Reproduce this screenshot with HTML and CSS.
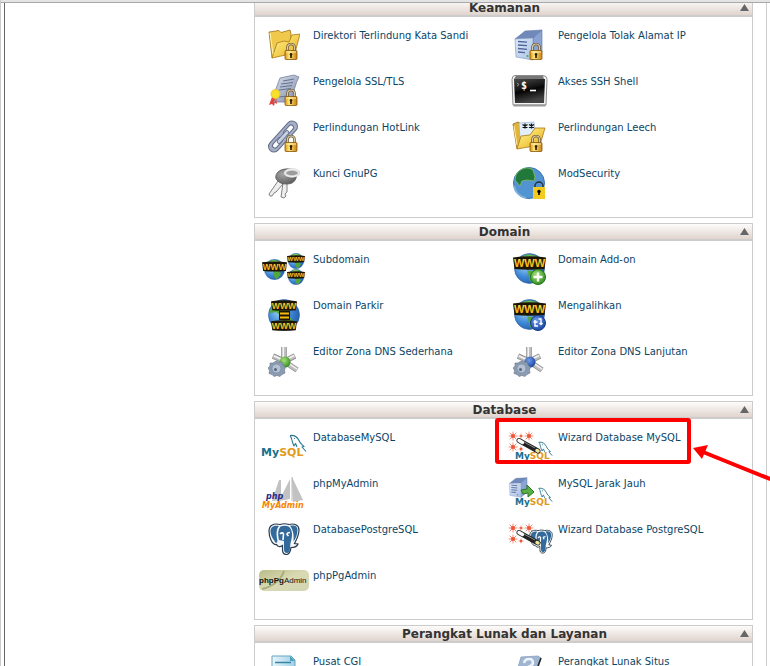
FILE: index.html
```html
<!DOCTYPE html>
<html lang="id">
<head>
<meta charset="utf-8">
<title>cPanel</title>
<link rel="stylesheet" href="styles.css">
</head>
<body>
<svg class="sprite" aria-hidden="true">
  <defs>
    <linearGradient id="gold" x1="0" y1="0" x2="1" y2="1"><stop offset="0" stop-color="#fff3a0"/><stop offset=".5" stop-color="#f5d253"/><stop offset="1" stop-color="#dda52a"/></linearGradient>
    <linearGradient id="brass" x1="0" y1="0" x2="1" y2="0"><stop offset="0" stop-color="#dc9414"/><stop offset=".35" stop-color="#ffe778"/><stop offset="1" stop-color="#c98212"/></linearGradient>
    <linearGradient id="steel" x1="0" y1="0" x2="1" y2="1"><stop offset="0" stop-color="#dfeafa"/><stop offset="1" stop-color="#a9bfe2"/></linearGradient>
    <linearGradient id="paper" x1="0" y1="0" x2="1" y2="1"><stop offset="0" stop-color="#dde3ef"/><stop offset="1" stop-color="#7f8baa"/></linearGradient>
    <linearGradient id="screen" x1="0" y1="0" x2=".3" y2="1"><stop offset="0" stop-color="#4a4a4a"/><stop offset=".45" stop-color="#161616"/><stop offset=".55" stop-color="#050505"/><stop offset="1" stop-color="#444"/></linearGradient>
    <linearGradient id="olive" x1="0" y1="0" x2="1" y2="1"><stop offset="0" stop-color="#b9bc87"/><stop offset=".5" stop-color="#d9dab3"/><stop offset="1" stop-color="#d3d4b4"/></linearGradient>
    <linearGradient id="sheet" x1="0" y1="0" x2="1" y2="0"><stop offset="0" stop-color="#e9f5fa"/><stop offset="1" stop-color="#9fd0e6"/></linearGradient>
    <linearGradient id="yellow" x1="0" y1="0" x2="0" y2="1"><stop offset="0" stop-color="#ffe14a"/><stop offset="1" stop-color="#f6a800"/></linearGradient>
    <radialGradient id="sea" cx=".35" cy=".4" r=".75"><stop offset="0" stop-color="#9dd2f8"/><stop offset=".5" stop-color="#3f88d6"/><stop offset="1" stop-color="#1c549f"/></radialGradient>
    <radialGradient id="keys" cx=".35" cy=".35" r=".7"><stop offset="0" stop-color="#a5a5a5"/><stop offset="1" stop-color="#5e5e5e"/></radialGradient>
    <radialGradient id="greenball" cx=".4" cy=".35" r=".7"><stop offset="0" stop-color="#a5e27a"/><stop offset="1" stop-color="#2e8a1c"/></radialGradient>
    <radialGradient id="blueball" cx=".4" cy=".35" r=".7"><stop offset="0" stop-color="#6f9cec"/><stop offset="1" stop-color="#17419a"/></radialGradient>

    <symbol id="lock" viewBox="0 0 13 17">
      <path d="M3 8V4.500a3.500 3.500 0 0 1 7 0V8" fill="none" stroke="#6b5630" stroke-width="2.600"/>
      <path d="M3 8V4.500a3.500 3.500 0 0 1 7 0V8" fill="none" stroke="#d8cba6" stroke-width="1.200"/>
      <rect x=".5" y="7.500" width="12" height="9" rx="1" fill="url(#brass)" stroke="#8a560b" stroke-width=".8"/>
      <path d="M1.500 9h10" stroke="#fff0a8" stroke-width="1"/>
      <path d="M6.500 10a1.400 1.400 0 0 1 .8 2.500v2.500H5.700v-2.500A1.400 1.400 0 0 1 6.500 10z" fill="#2a1800"/>
    </symbol>
    <symbol id="globe" viewBox="0 0 32 32">
      <circle cx="16" cy="16" r="15.500" fill="url(#sea)" stroke="#28579c" stroke-width=".6"/>
      <path d="M6 5c4-4 13-5 18-1l1 6-8 3-3 5-6-5-6 1c0-4 1-6 4-9zM14 18l9 1 3 4-6 8-4-3z" fill="#52a83c"/>
      <path d="M8 5c4-3 10-3 13-1l-6 3-8 1z" fill="#8ed067"/>
    </symbol>
    <symbol id="www" viewBox="0 0 33 14">
      <path d="M0 1.500Q16.500-1 33 1.500L31.500 13Q16.500 14.500 1.500 13z" fill="#1c1405"/>
      <text class="www-text" x="16.500" y="11" text-anchor="middle">WWW</text>
    </symbol>
    <symbol id="server" viewBox="0 0 32 32">
      <path d="M2 10L12 2l17-1-9 8z" fill="#7188ba" stroke="#667da9" stroke-width=".6"/>
      <path d="M20 9l9-8v22l-9 8z" fill="#8aa3d2" stroke="#5c75a7" stroke-width=".6"/>
      <path d="M2 10l18-1v22L3 28z" fill="url(#steel)" stroke="#7c93bf" stroke-width=".6"/>
      <path d="M5 12.500l9 .6M5 16l9 .7M5 19.500l9 .8M5 23l7 .6" stroke="#4d6597" stroke-width="1.300"/>
      <circle cx="14.500" cy="27" r="1" fill="#35b63a"/>
    </symbol>
    <symbol id="wand" viewBox="0 0 34 30">
      <g stroke="#f58a72" stroke-width="1" stroke-linecap="round">
        <path d="M6 1v8M2 5h8M3 2l6 6M9 2l-6 6M22 1v8M18 5h8M19 2l6 6M25 2l-6 6M6 12v8M2 16h8M3 13l6 6M9 13l-6 6"/>
        <path d="M14 3v4M12 5h4M14 16v4M12 18h4"/>
      </g>
      <g fill="#ee5436"><circle cx="6" cy="5" r="2"/><circle cx="22" cy="5" r="2"/><circle cx="6" cy="16" r="2"/><circle cx="14" cy="5" r="1"/><circle cx="14" cy="18" r="1.200"/></g>
      <path d="M12 9.500L31 20" stroke="#222" stroke-width="5" stroke-linecap="round"/>
      <path d="M12 9.500l3.500 2" stroke="#fafafa" stroke-width="3.500" stroke-linecap="round"/>
      <path d="M30 19.500l1 .5" stroke="#ece59c" stroke-width="3.500" stroke-linecap="round"/>
      <path d="M17 11L28 17" stroke="#8a8a8a" stroke-width="1"/>
    </symbol>
    <symbol id="dolphin" viewBox="0 0 18 18">
      <path d="M1 1.500c4-.5 7 1 9 5 1 3 3 4 5 6l-2 .5 4 4.500M1 1.500c1 1 1 2 1.500 3C3 7 3.500 9 5 12l1.500-2.500L8 13" fill="none" stroke="#2a7793" stroke-width="1.100" stroke-linejoin="round"/>
      <circle cx="5.500" cy="4.500" r=".6" fill="#2a7793"/>
    </symbol>
    <symbol id="elephant" viewBox="0 0 32 32">
      <path d="M1 8C1 2 6 0 12 1.500c3-1 6-1 9 0C26 0 31 2 31 7c0 6-3 10-4.500 13.500L30 21c-1 3-4 3.500-7 3.500-.5 3-1 7-4.500 7-3 0-4-2-4-5v-4c-3 2-5 1-6-1C4 22 1 14 1 8z" fill="#f4f7fa" stroke="#2b3c4c" stroke-width="1.200"/>
      <path d="M2.500 8C2.500 3.500 7 1.800 11 3 7.500 7 8.500 13 9.500 18c-1 3-2 2-3 0C4 15 2.500 11 2.500 8zM12.500 3.500c8-2.500 11 1.500 11.500 7 .3 4-1 7-1.700 10.500 0 4-.3 9-3 9s-3.300-1.500-3.300-4.500V18l-5-1C10 12 9.500 7 12.500 3.500zM22 2.800c4-1 7.500 0 7.500 4.200 0 5-2 8.500-4 11.500.5-6 0-11-3.500-15.700z" fill="#336a9c"/>
      <path d="M12 11c2-2 3.500-1 3.500 0L15 17M22 9.500c-2 0-3 1-3 2l1.500 1.500" fill="none" stroke="#fff" stroke-width="1.600"/>
    </symbol>
    <symbol id="joint" viewBox="0 0 32 32">
      <path d="M16 15V2M5 11l11 5M27 11l-10 5M17 17l12 8" stroke="#8b8b8b" stroke-width="5.500"/>
      <path d="M16 15V2M5 11l11 5M27 11l-10 5M17 17l12 8" stroke="#bdbdbd" stroke-width="4"/>
      <path d="M15.300 14V2M6 11l8 3.500M26 10.500l-6 3M20 18l9 6" stroke="#f4f4f4" stroke-width="1.500"/>
    </symbol>
    <symbol id="gear" viewBox="0 0 18 17">
      <path d="M8 1l3 1 3 0 1 3 2.500 2-1 3 .5 3-3 1.500-2 2-3-1-3 1-2-2-3-1 .5-3L0 8l2-2 0-3 3 0z" fill="#8b9bb0" stroke="#66778c" stroke-width=".6"/>
      <circle cx="8.500" cy="8.500" r="4.500" fill="#b3c1d2" stroke="#71839a" stroke-width=".6"/>
      <circle cx="7.500" cy="9.500" r="1.500" fill="#54657a"/>
    </symbol>
    <symbol id="folder" viewBox="0 0 32 32">
      <path d="M1 3l10-1.500 2 2L22 1l1 4 0 10L4 29z" fill="#f0c94c" stroke="#9a701b" stroke-width=".8"/>
      <path d="M4 29l5-15 7-2 5 1 3-7 8-1-5 19z" fill="url(#gold)" stroke="#a9791b" stroke-width=".8"/>
      <path d="M2 4l3 21" stroke="#fff4a7" stroke-width="1"/>
    </symbol>
  </defs>
</svg>

<div class="topbar"></div>
<main class="frame">
  <section class="panel">
    <header class="panel-head"><h2>Keamanan</h2><button type="button" class="toggle" aria-label="Ciutkan Keamanan"></button></header>
    <div class="items">
      <a class="item" href="#"><svg class="icon" viewBox="0 0 50 32"><use href="#folder" x="9" y="0" width="32" height="32"/><use href="#lock" x="25" y="14" width="14" height="17"/></svg><span>Direktori Terlindung Kata Sandi</span></a>
      <a class="item" href="#"><svg class="icon" viewBox="0 0 50 32"><use href="#server" x="9" y="0" width="32" height="32"/><use href="#lock" x="25" y="14" width="14" height="17"/></svg><span>Pengelola Tolak Alamat IP</span></a>
      <a class="item" href="#"><svg class="icon" viewBox="0 0 50 32"><path d="M21 3l14-3 5 2c-4 7-5 15-8 25H12z" fill="url(#paper)" stroke="#7682a0" stroke-width=".8"/><path d="M24 6l11-2M22 9l12-1.500M21 12l12-1.500M20 15l12-1.500M20 22l9-1" stroke="#66728f" stroke-width="1"/><path d="M13 22l-3 8 3-1 2 2 2-8zM17 22l1 7-3-2z" fill="#e2453f"/><circle cx="16.500" cy="19" r="4.500" fill="#f7df2c" stroke="#dfc226" stroke-width=".8"/><use href="#lock" x="25" y="14" width="14" height="17"/></svg><span>Pengelola SSL/TLS</span></a>
      <a class="item" href="#"><svg class="icon" viewBox="0 0 50 32"><path d="M11 .5h28q4 0 4 4L42 30H9L8 4.500q0-4 3-4z" fill="#f4f4f4" stroke="#8c8c8c"/><path d="M9.500 30.500h32" stroke="#9a9a9a" stroke-width="2"/><path d="M12 1h27l1 3H10z" fill="#777"/><path d="M10 4h31l-1 24H11z" fill="url(#screen)"/><path d="M13 8l2 1.500-2 1.500" fill="none" stroke="#aaa" stroke-width=".8"/><text class="prompt" x="17" y="14">$</text><path d="M26 15.500h6" stroke="#fff" stroke-width="1.600"/></svg><span>Akses SSH Shell</span></a>
      <a class="item" href="#"><svg class="icon" viewBox="0 0 50 32"><g fill="none"><path d="M15 25.500L33 5.500" stroke="#656f8b" stroke-width="12" stroke-linecap="round"/><path d="M15 25.500L33 5.500" stroke="#a5afc6" stroke-width="10" stroke-linecap="round"/><path d="M16 24.500l5-5.500M27 12l5-5.500" stroke="#656f8b" stroke-width="6" stroke-linecap="round"/><path d="M16 24.500l5-5.500M27 12l5-5.500" stroke="#fff" stroke-width="4" stroke-linecap="round"/><path d="M20 20.500l8-9" stroke="#656f8b" stroke-width="4.500" stroke-linecap="round"/><path d="M20 20.500l8-9" stroke="#c8d1e2" stroke-width="2.800" stroke-linecap="round"/></g><use href="#lock" x="25" y="14" width="14" height="17"/></svg><span>Perlindungan HotLink</span></a>
      <a class="item" href="#"><svg class="icon" viewBox="0 0 50 32"><path d="M9 3l5-2 3 2 1 20-5 5z" fill="#e3b43a" stroke="#94671a" stroke-width=".8"/><path d="M15 2l15-1 2 16H16z" fill="#e0effb" stroke="#8cacc6" stroke-width=".6"/><path d="M21 2.500v5M18.500 3.500l5 3M23.500 3.500l-5 3M27.500 2.500v5M25 3.500l5 3M30 3.500l-5 3" stroke="#111" stroke-width="1.300"/><path d="M13 28l4-13 9-1 5-7h10l-5 17z" fill="url(#gold)" stroke="#a9791b" stroke-width=".8"/><path d="M10 5l3 19" stroke="#ffeea0"/><use href="#lock" x="25" y="14" width="14" height="17"/></svg><span>Perlindungan Leech</span></a>
      <a class="item" href="#"><svg class="icon" viewBox="0 0 50 32"><path d="M19 14l-9 13 1 2 2 0 2-3 2-1 7-8zM24 16l-2 14 3 1 2-2-1-2 2-2 0-10z" fill="#eee" stroke="#747474" stroke-width=".9"/><path d="M19 5c4-4 14-4 17-1 3 4 1 10-3 12-5 2-11 1-14-2-3-2-3-6 0-9z" fill="url(#keys)" stroke="#555" stroke-width=".8"/><ellipse cx="33" cy="6" rx="7" ry="3.500" fill="#9b9b9b" stroke="#d4d4d4" stroke-width="2.500"/><ellipse cx="33" cy="6" rx="7" ry="3.500" fill="none" stroke="#f4f4f4" stroke-width="1"/></svg><span>Kunci GnuPG</span></a>
      <a class="item" href="#"><svg class="icon" viewBox="0 0 50 32"><circle cx="25" cy="16" r="15.500" fill="#5293d2" stroke="#3c76aa"/><path d="M12 8C16 1 24-1 29 3l2 7-1 4-7-1-5 1-2 5-5-6z" fill="#21783b" stroke="#85bd65" stroke-width=".8"/><path d="M10 19c1 6 6 11 12 12" fill="none" stroke="#7fb1dc" stroke-width="2"/><path d="M31 21v-2a4 4 0 0 1 8 0v2" fill="none" stroke="#253038" stroke-width="1.400"/><path d="M29 20h12v12H29z" fill="#f3ca1e"/><circle cx="35" cy="24.500" r="1.700"/><path d="M34.200 25h1.600v3h-1.600z"/></svg><span>ModSecurity</span></a>
    </div>
  </section>

  <section class="panel">
    <header class="panel-head"><h2>Domain</h2><button type="button" class="toggle" aria-label="Ciutkan Domain"></button></header>
    <div class="items">
      <a class="item" href="#"><svg class="icon" viewBox="0 0 50 32"><use href="#globe" x="5" y="6" width="21" height="21"/><use href="#www" x="3" y="8" width="25" height="11"/><use href="#globe" x="29" y="0" width="16" height="16"/><use href="#www" x="28" y="2" width="18" height="8"/><use href="#globe" x="29" y="16" width="16" height="16"/><use href="#www" x="28" y="18" width="18" height="8"/></svg><span>Subdomain</span></a>
      <a class="item" href="#"><svg class="icon" viewBox="0 0 50 32"><use href="#globe" x="10" y="0" width="31" height="31"/><use href="#www" x="9" y="3" width="33" height="14"/><circle cx="34" cy="24" r="7.500" fill="url(#greenball)" stroke="#24751a"/><path d="M34 19.500v9M29.500 24h9" stroke="#fff" stroke-width="2.400"/></svg><span>Domain Add-on</span></a>
      <a class="item" href="#"><svg class="icon" viewBox="0 0 50 32"><use href="#globe" x="9" y="0" width="32" height="32"/><use href="#www" x="12" y="1" width="26" height="11"/><use href="#www" x="12" y="21" width="26" height="11"/><path d="M20 12h11v9H20z" fill="#1c1405"/><path d="M21 14.500h9M21 18.500h9" stroke="#f8b90d" stroke-width="2"/></svg><span>Domain Parkir</span></a>
      <a class="item" href="#"><svg class="icon" viewBox="0 0 50 32"><use href="#globe" x="10" y="0" width="31" height="31"/><use href="#www" x="9" y="3" width="33" height="14"/><circle cx="34" cy="24" r="7.500" fill="url(#blueball)" stroke="#163c88"/><path d="M31 21v6h3M29.500 23h4M34.500 20h2.500v5M35.500 24l1.500 1.500 1.500-1.500" fill="none" stroke="#fff" stroke-width="1.400"/></svg><span>Mengalihkan</span></a>
      <a class="item" href="#"><svg class="icon" viewBox="0 0 50 32"><use href="#joint" x="9" y="0" width="32" height="32"/><circle cx="26" cy="17" r="5.500" fill="url(#greenball)"/><use href="#gear" x="9" y="15" width="18" height="17"/></svg><span>Editor Zona DNS Sederhana</span></a>
      <a class="item" href="#"><svg class="icon" viewBox="0 0 50 32"><use href="#joint" x="9" y="0" width="32" height="32"/><circle cx="26" cy="17" r="5.500" fill="url(#blueball)"/><use href="#gear" x="9" y="15" width="18" height="17"/></svg><span>Editor Zona DNS Lanjutan</span></a>
    </div>
  </section>

  <section class="panel">
    <header class="panel-head"><h2>Database</h2><button type="button" class="toggle" aria-label="Ciutkan Database"></button></header>
    <div class="items">
      <a class="item" href="#"><svg class="icon" viewBox="0 0 50 32"><use href="#dolphin" x="30" y="3" width="18" height="18"/><text class="mysql" x="2" y="25">My<tspan class="sql">SQL</tspan></text></svg><span>DatabaseMySQL</span></a>
      <a class="item" href="#"><svg class="icon" viewBox="0 0 50 32"><use href="#dolphin" x="34" y="10" width="15" height="15"/><text class="mysql small" x="11" y="28">My<tspan class="sql">SQL</tspan></text><use href="#wand" x="3" y="0" width="34" height="30"/></svg><span>Wizard Database MySQL</span>
        <svg class="callout" viewBox="0 0 290 80" aria-hidden="true"><rect x="2" y="2" width="192" height="42" rx="1" fill="none" stroke="#f00" stroke-width="4"/><path d="M208 34L290 67" stroke="#f00" stroke-width="4"/><path d="M198 30l15-3-6 14z" fill="#f00"/></svg></a>
      <a class="item" href="#"><svg class="icon" viewBox="0 0 50 32"><path d="M33 0l11 23-10 2zM20 3l2 0 0 20-9 1zM31 2v20l-11 2z" fill="#c2c2c2"/><path d="M33 0v24" stroke="#a8a8a8" stroke-width=".8"/><text class="php" x="7" y="22">php</text><text class="myadmin" x="3" y="31">MyAdmin</text></svg><span>phpMyAdmin</span></a>
      <a class="item" href="#"><svg class="icon" viewBox="0 0 50 32"><use href="#server" x="4" y="0" width="21" height="21"/><path d="M17 13l6-1V8l7 7-6 5v-4l-5 1z" fill="#59b047" stroke="#2c7524"/><use href="#dolphin" x="34" y="10" width="15" height="15"/><text class="mysql small" x="11" y="28">My<tspan class="sql">SQL</tspan></text></svg><span>MySQL Jarak Jauh</span></a>
      <a class="item" href="#"><svg class="icon" viewBox="0 0 50 32"><use href="#elephant" x="9" y="0" width="32" height="32"/></svg><span>DatabasePostgreSQL</span></a>
      <a class="item" href="#"><svg class="icon" viewBox="0 0 50 32"><use href="#elephant" x="25" y="6" width="24" height="25"/><use href="#wand" x="3" y="0" width="34" height="30"/></svg><span>Wizard Database PostgreSQL</span></a>
      <a class="item" href="#"><svg class="icon" viewBox="0 0 50 32"><rect x="0" y="1" width="50" height="21" rx="5" fill="url(#olive)"/><path d="M3 20C15 17 22 11 25 2" stroke="#a9ad7c" stroke-width="2" fill="none"/><text class="pg" x="0" y="14"><tspan class="strong">phpPg</tspan>Admin</text></svg><span>phpPgAdmin</span></a>
    </div>
  </section>

  <section class="panel">
    <header class="panel-head"><h2>Perangkat Lunak dan Layanan</h2><button type="button" class="toggle" aria-label="Ciutkan Perangkat Lunak dan Layanan"></button></header>
    <div class="items">
      <a class="item" href="#"><svg class="icon" viewBox="0 0 50 32"><path d="M13 1h19l4 4v26H13z" fill="url(#sheet)" stroke="#66a5bf"/><path d="M31 1v5h5" fill="#4d9dbd"/><path d="M16 7.500h16" stroke="#3686a5" stroke-width="1.500"/></svg><span>Pusat CGI</span></a>
      <a class="item" href="#"><svg class="icon" viewBox="0 0 50 32"><path d="M17 2l17-1 3 2-8 27H9z" fill="#9fb5d2" stroke="#8aa0bf" stroke-width=".8"/><path d="M20 8q1-4 5-4t4 4q-1 3-5 4" fill="none" stroke="#eef4fb" stroke-width="2.500"/><path d="M37 3l-3 8" stroke="#222" stroke-width="1.500"/></svg><span>Perangkat Lunak Situs</span></a>
    </div>
  </section>
</main>
</body>
</html>
```
FILE: styles.css
```css
* { box-sizing: border-box; }
body { margin: 0; height: 100vh; overflow: hidden; display: flex; flex-direction: column; background: #fff; font-family: Verdana, "DejaVu Sans", sans-serif; font-size: 10px; border-left: 1px solid #ccc; }
.sprite { position: absolute; width: 0; height: 0; }
.topbar { flex: none; height: 3px; margin-left: -1px; background: #e4e4e4; border-bottom: 1px solid #a8a8a8; position: relative; z-index: 1; }
.frame { flex: 1; min-height: 0; overflow: visible; margin: 0 3px; padding: 0 13px 0 249px; border-left: 1px solid #666; border-right: 1px solid #ccc; }
.panel { border: 1px solid #ccc; margin-bottom: 5px; }
.panel:first-child { margin-top: -4px; }
.panel:nth-child(1) { margin-top: -4px; }
.panel-head { display: flex; align-items: center; height: 17px; padding: 0 3px 0 14px; border-bottom: 2px solid #ccc; background: linear-gradient(#fdfcfb, #e0d4cd); }
.panel-head h2 { flex: 1; margin: 0; padding-top: 1px; font-size: 12px; line-height: 16px; text-align: center; color: #333; }
.toggle { width: 9px; height: 7px; padding: 0; border: 0; background: #666; clip-path: polygon(50% 0, 100% 100%, 0 100%); }
.items { display: grid; grid-template-columns: 1fr 1fr; grid-auto-rows: 46px; padding: 12px 3px 4px 4px; }
.item { position: relative; display: flex; gap: 4px; color: #0b4566; line-height: 14px; text-decoration: none; white-space: nowrap; }
.icon { flex: none; width: 50px; height: 32px; overflow: visible; }
.callout { position: absolute; left: -9px; top: -13px; width: 290px; height: 80px; }
.www-text { font: bold 11px "Liberation Sans", sans-serif; fill: url(#yellow); }
.prompt { font: bold 10px "DejaVu Sans Mono", monospace; fill: #fff; }
.mysql { font: bold 11px "DejaVu Sans", sans-serif; fill: #17708f; }
.mysql.small { font-size: 9px; }
.sql { fill: #e39a1b; }
.php { font: italic bold 8px "DejaVu Sans", sans-serif; fill: #26268a; }
.myadmin { font: italic bold 8px "DejaVu Sans", sans-serif; fill: #f78600; }
.pg { font: 8px "Liberation Sans", sans-serif; fill: #111; }
.strong { font-weight: bold; }
```
